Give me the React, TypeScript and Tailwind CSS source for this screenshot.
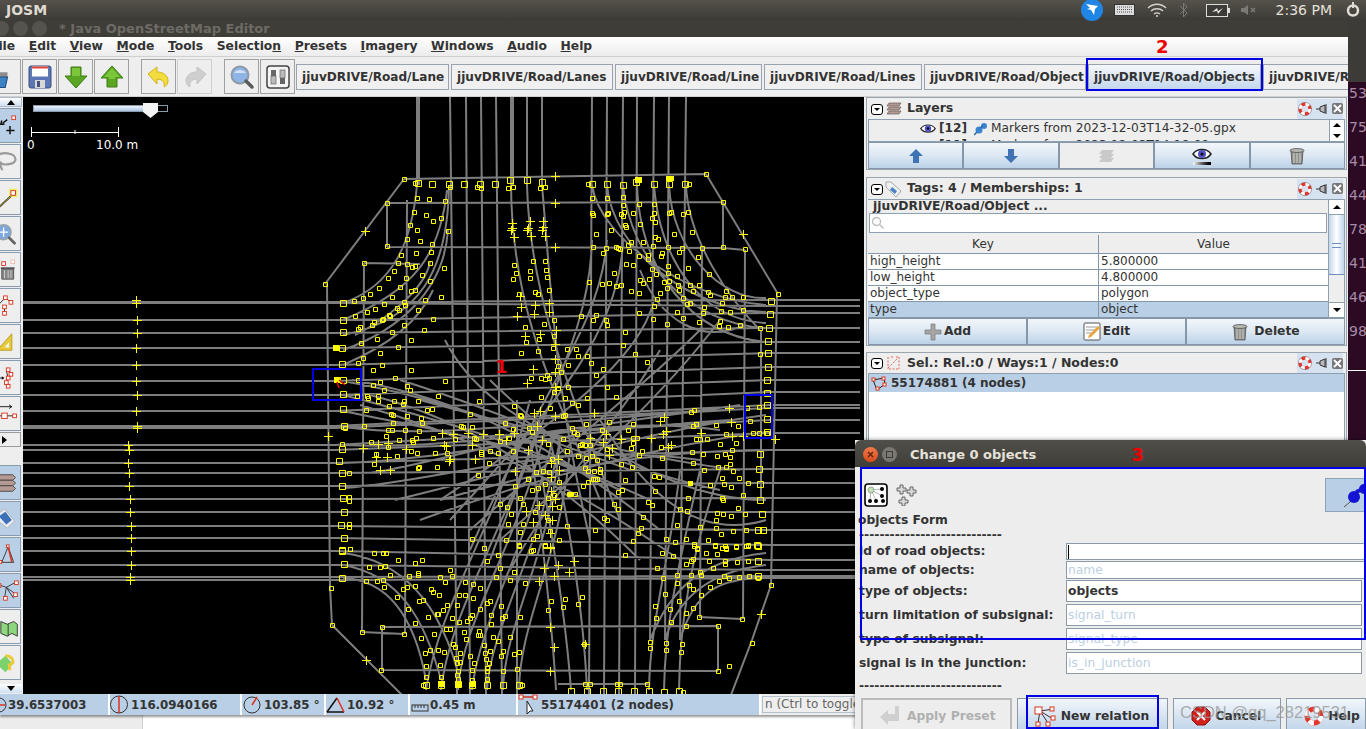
import React from "react";

type P = [number, number];

// Road geometry: cubic curves, control points only
const curves: [P, P, P, P][] = [
  [[417, 185], [412, 240], [395, 285], [343, 303]],
  [[447, 190], [440, 255], [415, 290], [343, 320]],
  [[449, 185], [448, 270], [420, 320], [343, 335]],
  [[448, 230], [444, 290], [400, 330], [343, 350]],
  [[433, 290], [420, 320], [390, 345], [343, 365]],
  [[430, 262], [425, 290], [385, 320], [355, 335]],
  [[592, 185], [600, 240], [690, 300], [766, 305]],
  [[607, 185], [612, 250], [690, 310], [766, 312]],
  [[623, 185], [630, 260], [690, 325], [766, 328]],
  [[637, 185], [640, 270], [690, 335], [766, 342]],
  [[654, 185], [660, 260], [700, 320], [766, 323]],
  [[669, 185], [672, 250], [720, 300], [766, 298]],
  [[686, 185], [688, 240], [730, 300], [760, 330]],
  [[640, 270], [660, 320], [700, 345], [745, 325]],
  [[511, 185], [512, 320], [560, 400], [600, 500]],
  [[527, 185], [530, 300], [570, 390], [620, 520]],
  [[542, 185], [552, 300], [555, 390], [590, 540]],
  [[592, 240], [590, 320], [560, 370], [490, 560]],
  [[607, 240], [600, 330], [540, 390], [470, 550]],
  [[623, 240], [620, 340], [540, 420], [450, 520]],
  [[654, 300], [640, 360], [560, 420], [440, 500]],
  [[530, 400], [500, 520], [440, 600], [426, 690]],
  [[540, 420], [510, 520], [450, 610], [441, 690]],
  [[545, 430], [520, 540], [462, 620], [458, 690]],
  [[555, 430], [530, 540], [480, 620], [472, 690]],
  [[560, 440], [540, 550], [490, 630], [487, 690]],
  [[560, 440], [550, 560], [505, 620], [503, 690]],
  [[570, 450], [560, 560], [520, 620], [519, 690]],
  [[530, 440], [540, 520], [552, 620], [556, 690]],
  [[535, 440], [550, 520], [566, 620], [571, 690]],
  [[550, 440], [570, 520], [584, 620], [587, 690]],
  [[680, 470], [670, 560], [650, 620], [649, 690]],
  [[700, 470], [680, 560], [665, 620], [664, 690]],
  [[720, 470], [690, 560], [680, 620], [679, 690]],
  [[343, 553], [400, 560], [440, 600], [460, 680]],
  [[343, 565], [400, 575], [425, 620], [441, 680]],
  [[343, 578], [390, 580], [415, 620], [426, 680]],
  [[766, 553], [700, 560], [670, 590], [650, 640]],
  [[766, 565], [720, 570], [680, 590], [665, 640]],
  [[766, 578], [720, 578], [695, 590], [680, 640]],
  [[766, 520], [700, 540], [650, 500], [600, 420]],
  [[766, 500], [700, 500], [640, 470], [580, 430]],
  [[343, 381], [450, 400], [520, 430], [630, 470]],
  [[343, 395], [440, 420], [530, 445], [650, 500]],
  [[343, 411], [430, 430], [520, 440], [620, 490]],
  [[343, 427], [440, 440], [540, 420], [730, 410]],
  [[343, 445], [450, 450], [560, 430], [740, 405]],
  [[343, 463], [450, 460], [560, 430], [730, 420]],
  [[370, 473], [460, 460], [580, 410], [720, 430]],
  [[345, 488], [450, 480], [550, 440], [700, 460]],
  [[360, 405], [450, 430], [550, 470], [680, 560]],
  [[370, 395], [470, 420], [560, 480], [640, 560]],
  [[352, 380], [470, 400], [560, 450], [660, 530]],
  [[766, 415], [650, 430], [520, 470], [395, 500]],
  [[766, 432], [660, 445], [530, 480], [420, 520]],
  [[766, 450], [660, 450], [540, 470], [440, 500]],
  [[740, 470], [650, 460], [530, 430], [420, 400]],
  [[720, 490], [620, 470], [530, 420], [400, 380]],
  [[700, 330], [640, 390], [560, 450], [470, 530]],
  [[720, 320], [660, 400], [580, 470], [500, 540]],
  [[660, 350], [620, 420], [560, 480], [510, 570]],
  [[445, 340], [470, 390], [520, 420], [560, 440]],
  [[490, 380], [520, 410], [550, 430], [570, 460]],
];

const hLines: [number, number][] = [
  [302, 300], [303, 306], [320, 313], [333, 328], [348, 342], [365, 353], [381, 367], [395, 380], [411, 392],
  [426, 405], [428, 408], [445, 420], [450, 433], [463, 450], [473, 469], [486, 483], [499, 498], [512, 512],
  [526, 530], [538, 545], [551, 560], [565, 570], [577, 576], [580, 578],
];

const vLines: number[][] = [
  [417, 97, 417, 185], [419, 97, 419, 185], [450, 97, 457, 695], [466, 97, 470, 695], [481, 97, 486, 695], [496, 97, 502, 695],
  [511, 97, 511, 185], [513, 97, 513, 185], [527, 97, 527, 185], [542, 97, 542, 185],
  [592, 97, 589, 695], [607, 97, 604, 695], [623, 97, 619, 695], [637, 97, 635, 695], [654, 97, 650, 640], [669, 97, 665, 640], [686, 97, 680, 640],
  [517, 400, 517, 695], [364, 263, 362, 632], [407, 200, 405, 634], [382, 627, 382, 670], [387, 203, 387, 247], [723, 202, 723, 248],
  [702, 248, 700, 618], [745, 250, 743, 619], [761, 330, 761, 500], [327, 284, 330, 587], [777, 294, 771, 585], [718, 626, 718, 671],
];

const segs: number[][] = [
  [404, 179, 706, 174], [706, 174, 778, 294], [404, 179, 325, 284], [330, 587, 332, 625], [332, 625, 402, 695],
  [771, 585, 752, 640], [752, 640, 731, 695], [387, 203, 723, 202], [387, 247, 723, 248], [723, 248, 745, 250],
  [382, 627, 718, 626], [381, 670, 718, 671], [362, 632, 404, 634], [699, 617, 742, 619], [558, 684, 648, 684], [364, 263, 420, 264],
];

// Node lists read off 3x crops: origin x, origin y, then x,y pairs in crop pixels
const A: number[] = [253,28,1159,13,202,100,1210,97,202,229,1210,231,1276,238,16,343,1375,373,133,280,292,85,328,88,376,94,283,127,319,136,340,154,364,145,271,166,292,181,385,184,262,208,301,214,337,223,244,256,289,250,334,247,235,280,262,283,286,289,277,292,331,280,373,295,223,304,307,316,205,325,259,325,331,334,241,352,178,355,286,361,274,364,364,382,151,373,217,382,130,385,103,394,316,391,193,403,253,397,256,406,166,418,232,415,238,421,295,421,142,427,106,439,208,436,211,439,187,451,190,448,340,448,163,457,157,466,121,472,115,478,253,466,313,481,217,487,172,508,124,520,274,511,235,532,181,550,130,565,115,580,187,586,160,601,274,601,226,625,115,631,181,637,376,634,160,646,262,649,271,661,193,661,355,679,112,678,142,679,145,685,175,679,284,40,470,52,484,55,391,52,565,55,580,52,661,55,676,52,805,43,1108,43,817,85,862,85,910,82,910,106,958,103,1003,103,817,130,820,136,865,130,862,133,913,127,904,133,910,139,940,130,1003,130,997,145,1048,130,1054,127,1090,133,1105,127,916,166,919,172,961,163,1006,157,874,181,829,193,1063,193,1117,187,1006,202,1015,208,934,217,970,217,925,226,820,232,859,235,889,232,895,235,901,238,1000,229,1045,232,1087,235,1147,235,928,244,850,250,1027,250,1024,259,1078,247,958,259,985,256,985,268,1135,262,919,283,940,286,1045,289,997,298,1105,295,883,310,1009,313,1045,310,1072,319,1168,313,961,331,970,340,988,328,1033,337,1048,334,808,337,847,343,868,340,889,349,904,346,1075,346,1111,346,1138,346,1042,355,1078,361,1120,364,934,364,958,370,1021,370,1165,367,1169,376,1219,364,1216,382,1237,382,1270,382,1012,388,1090,385,1207,400,1111,400,1102,403,1003,409,1153,412,1150,430,1070,427,958,430,1204,424,1231,427,1270,421,784,439,829,436,820,451,859,451,862,466,1000,448,1090,445,1138,457,1042,463,1201,454,1198,469,1225,472,1261,466,916,487,1321,475,910,526,946,553,1321,553,982,577,850,598,829,616,814,580,802,559,775,559,769,538,742,538,745,586,715,589,724,607,700,535,703,451,673,463,703,499,616,472,658,508,619,517,604,550,655,544,583,286,589,310,580,328,631,304,631,325,640,274,674,274,677,301,680,322,688,361,655,373,644,367,598,373,634,625,664,625,676,628,688,625,682,616,745,652,862,652,703,667,715,655,664,682,802,685,889,682,736,685];
const AB: number[] = [295,40,337,43,388,43,433,43,481,43,526,43,571,31,622,31,665,37,817,43,862,43,910,46,949,37,1003,43,1048,43,1096,43,70,400,70,449,70,487,67,535,67,583,70,631,70,673,1354,394,1351,433,1348,475,1345,514,1345,550,1345,592,1342,631,1342,670];
const AX: number[] = [136,184,706,19,706,100,706,232,1268,193,577,160,577,175,574,181,583,202,631,154,625,175,622,181,634,199,670,154,670,172,667,181,676,199,601,379,604,412,592,439,646,406,643,433,688,400,688,427,708,481,616,499,661,493,706,523,706,568,640,598,706,607,622,640,706,652];
const B: number[] = [145,4,193,2,223,2,265,2,448,2,178,19,220,13,553,18,109,31,292,31,307,28,184,43,190,46,421,43,232,49,274,55,571,46,574,49,661,25,103,79,190,70,277,70,394,79,400,82,427,80,526,70,700,48,706,46,175,91,187,91,226,91,268,94,550,88,598,85,607,97,44,85,169,109,310,115,208,121,247,121,259,115,250,127,376,118,433,115,439,118,538,115,511,124,124,127,655,133,175,142,35,133,699,118,244,154,262,160,316,160,352,160,454,157,454,163,481,154,505,160,550,154,712,154,139,163,202,169,667,178,133,193,478,190,322,202,265,205,268,202,58,220,619,217,640,214,658,217,445,226,595,238,688,247,646,253,556,259,607,271,625,265,673,286,718,281,655,295,571,295,58,292,58,304,511,313,580,313,532,322,688,322,616,337,544,343,655,361,535,373,580,373,58,373,58,382,712,379,571,397,661,394,622,409,427,418,610,418,529,421,688,421,568,436,646,436,61,448,463,445];
const BB: number[] = [40,28,43,79,37,148,28,184,37,220,37,259,40,295,43,337,34,376,43,415,37,451];
const BX: number[] = [337,100,370,103,415,100,460,103,508,103,553,100,613,40,631,34,676,49,622,79,145,133,100,145,175,130,529,121,637,121,343,136,349,139,427,136,229,148,595,151,139,172,172,172,361,178,358,184,436,178,151,211,181,211,556,214,664,190,685,178,688,211,664,232,664,274,676,298,628,316,667,319,589,334,646,346,667,361,610,367,661,400,661,442];
const C: number[] = [25,5,46,10,67,10,85,16,592,25,628,20,424,37,433,31,40,49,46,46,178,67,250,73,109,73,430,79,439,73,499,76,601,64,563,79,67,85,73,97,82,103,157,91,235,91,529,103,610,100,628,100,652,100,250,115,262,115,38,118,91,136,97,133,106,136,121,136,250,130,439,118,451,118,472,118,511,133,559,130,244,145,334,142,172,148,277,154,52,154,427,157,547,151,85,169,109,175,127,169,268,166,460,163,502,169,526,163,541,172,142,181,337,175,7,178,214,193,430,190,541,193,106,205,247,202,505,202,529,202,463,211,550,214,115,214,133,214,151,208,151,217,313,229,328,232,517,235,568,235,226,241,130,238,136,238,142,238,115,247,28,247,595,250,481,256,544,262,523,253,100,259,316,274,217,271,205,277,580,286,415,295,517,295,520,301,76,283,12,286,295,307,307,316,193,313,205,328,391,328,412,334,565,325,28,322,502,340,520,343,586,343,544,349,280,352,163,355,172,361,499,361,382,376,52,379,451,382,499,385,589,391,550,394,136,391,274,385,265,400,514,403,28,421,250,424,349,418,376,427,409,418,475,421,433,433,496,436,442,445,517,445,526,439,529,445,559,439,589,439,595,436];
const CB: number[] = [650,16,652,58,652,97,631,163,628,208,631,253,631,301,637,343,625,391,640,390,622,436];
const CX: number[] = [538,25,133,40,343,52,331,64,544,67,349,94,454,100,340,103,547,109,580,109,121,115,169,103,160,127,214,118,304,115,364,136,355,142,187,145,178,166,676,118];
const D: number[] = [61,13,133,25,160,25,169,25,463,10,568,2,610,16,604,19,646,2,505,31,205,46,277,46,256,55,472,49,118,67,151,67,166,64,361,76,511,70,553,82,181,91,238,94,265,85,265,90,331,97,367,94,499,97,109,109,142,109,160,106,346,112,406,112,430,118,541,106,586,115,163,127,220,133,232,127,256,124,304,133,310,142,451,130,328,151,388,151,406,151,202,157,430,160,268,169,280,166,472,175,481,169,664,169,706,163,352,181,382,181,514,184,700,187,235,193,340,196,451,193,655,196,322,208,325,208,295,217,367,220,427,211,421,220,412,229,484,211,517,220,526,214,571,217,388,232,256,235,484,238,157,247,349,253,361,253,448,259,403,262,97,262,223,268,313,268,445,271,451,271,274,280,490,277,541,277,409,283,505,289,370,298,376,307,463,301,301,316,325,316,343,322,286,325,391,325,466,325,481,319,520,319,553,328,568,322,421,334,514,334,379,340,469,343,382,355,391,352,433,355,478,355,331,361,289,364,472,370,562,373,154,376,385,379,427,376,472,379,520,379,382,391,289,397,334,397,385,403,427,406,472,403,280,421,577,421,5,241,2,130];
const DB: number[] = [37,19,43,58,37,100,289,421,334,421,385,418,427,421,472,421,520,421,568,421];
const DX: number[] = [109,346,643,70,685,61,673,94,628,109,661,10,718,82,661,247,661,379,673,307];
const E: number[] = [226,31,337,25,370,34,442,13,469,25,502,28,517,10,529,13,559,7,589,4,595,2,496,2,433,2,322,70,409,58,424,49,430,43,478,49,526,49,526,58,562,52,595,49,490,70,451,82,454,91,340,100,382,91,424,91,523,94,538,100,568,97,598,94,625,100,508,109,382,115,418,121,430,133,481,127,664,121,346,148,454,151,97,157,388,169,85,178,316,184,361,193,430,190,409,205,448,217,577,223,319,220,364,232,409,244,505,244,301,292,301,310,349,295,349,316,397,298,394,322,607,295,538,364,505,379,13,307,55,304,103,298,106,418,121,418,202,418,211,418,292,418,400,442,46,163,40,187,25,418];
const EB: number[] = [625,4,625,49,625,94,64,439,112,439,160,439,205,439,253,439,298,439,343,442,388,439];
const EX: number[] = [25,61,73,49,55,82,106,298,634,208];

const filled: number[][] = [
  [333, 345, 6, 6], [334, 377, 6, 6], [635, 177, 7, 6], [666, 176, 8, 5], [438, 681, 7, 6], [455, 681, 6, 7], [470, 681, 6, 6], [688, 481, 5, 5], [568, 492, 5, 5],
];

const leftCrosses: P[] = [
  [136, 300], [136, 303], [137, 320], [137, 333], [136, 348], [136, 365], [136, 381], [137, 395], [136, 411], [137, 426], [137, 428],
  [128, 445], [129, 450], [128, 463], [129, 473], [129, 486], [130, 499], [130, 512], [131, 526], [131, 538], [131, 551], [131, 565],
  [130, 577], [130, 580], [328, 436], [366, 660],
];

function buildMap() {
  let roads = "";
  let nodes = "";
  let big = "";
  let plus = "";
  const decode = (ox: number, oy: number, list: number[], keep: (x: number, y: number) => boolean, add: (x: number, y: number) => void) => {
    for (let i = 0; i + 1 < list.length; i += 2) {
      const x = Math.round(ox + list[i] / 3);
      const y = Math.round(oy + list[i + 1] / 3);
      if (keep(x, y)) add(x, y);
    }
  };
  const sq = (x: number, y: number, s: number) => `M${x + 0.5 - s / 2} ${y + 0.5 - s / 2}h${s}v${s}h${-s}z`;
  const addNode = (x: number, y: number) => (nodes += sq(x, y, 4));
  const addBig = (x: number, y: number) => (big += sq(x, y, 6));
  const addPlus = (x: number, y: number) => (plus += `M${x - 4} ${y + 0.5}h9M${x + 0.5} ${y - 4}v9`);
  const top = (_: number, y: number) => y < 400;
  const left = (x: number) => x < 570;
  const right = (x: number) => x >= 570;
  const sets: [number, number, number[], (x: number, y: number) => boolean][] = [
    [320, 170, A, top],
    [330, 400, B, left],
    [550, 400, C, right],
    [330, 545, D, left],
    [550, 545, E, right],
  ];
  sets.forEach(([ox, oy, l, k]) => decode(ox, oy, l, k, addNode));
  ([[320, 170, AB, top], [330, 400, BB, left], [550, 400, CB, right], [330, 545, DB, left], [550, 545, EB, right]] as typeof sets).forEach(
    ([ox, oy, l, k]) => decode(ox, oy, l, k, addBig),
  );
  ([[320, 170, AX, top], [330, 400, BX, left], [550, 400, CX, right], [330, 545, DX, left], [550, 545, EX, right]] as typeof sets).forEach(
    ([ox, oy, l, k]) => decode(ox, oy, l, k, addPlus),
  );
  leftCrosses.forEach(([x, y]) => addPlus(x, y));

  hLines.forEach(([l, r]) => {
    roads += `M23 ${l}L335 ${l}L770 ${r}L860 ${r}`;
  });
  vLines.forEach(([a, b, c, d]) => (roads += `M${a} ${b}L${c} ${d}`));
  segs.forEach(([a, b, c, d]) => (roads += `M${a} ${b}L${c} ${d}`));
  curves.forEach(([a, b, c, d]) => {
    roads += `M${a[0]} ${a[1]}C${b[0]} ${b[1]} ${c[0]} ${c[1]} ${d[0]} ${d[1]}`;
  });
  return { roads, nodes, big, plus };
}

function Roads() {
  const m = buildMap();
  return (
    <svg className="absolute left-[-23px] top-[-97px]" width={860} height={700} viewBox="0 0 860 700" fill="none">
      <path d={m.roads} stroke="#7e7e7e" strokeWidth="2" />
      <path d={m.nodes} stroke="#ffff00" strokeWidth="1" />
      <path d={m.big} stroke="#ffff00" strokeWidth="1" />
      <path d={m.plus} stroke="#ffff00" strokeWidth="1" />
      {filled.map(([x, y, w, h], i) => (
        <rect key={i} x={x} y={y} width={w} height={h} fill="#ffff00" />
      ))}
      <path d="M337 382l2 6M339 380l6 5" stroke="#e00" strokeWidth="1.5" />
    </svg>
  );
}

const Svg = ({ s = 24, children, className = "" }: { s?: number; children: React.ReactNode; className?: string }) => (
  <svg width={s} height={s} viewBox="0 0 24 24" className={`shrink-0 overflow-visible ${className}`} fill="none">
    {children}
  </svg>
);

const IconOpen = () => (
  <Svg s={28}>
    <path d="M-4 6h9l2 2h8v4H-4z" fill="#8d8d8d" />
    <path d="M-5 12h20l-2 9H-5z" fill="#3d83c4" stroke="#1f4f83" />
  </Svg>
);
const IconSave = () => (
  <Svg s={24}>
    <rect x="1" y="1" width="22" height="22" rx="2" fill="#5c78b4" stroke="#3c4e7e" />
    <rect x="4" y="1.5" width="16" height="10" fill="#fff" />
    <rect x="4" y="1.5" width="16" height="2" fill="#e0443a" />
    <rect x="7" y="15" width="10" height="8" fill="#d8d8d8" />
    <rect x="9" y="16" width="3" height="6" fill="#44557d" />
  </Svg>
);
const IconArrow = ({ up }: { up?: boolean }) => (
  <Svg s={24}>
    <path d={up ? "M12 1L23 13H17V22H7V13H1z" : "M12 23L23 11H17V2H7V11H1z"} fill="#5aa521" stroke="#3c7a12" />
    <path d={up ? "M12 3L20 12H15V14H9V12H4z" : "M8 3h8v8H8z"} fill="#7cc63a" />
  </Svg>
);
const IconUndo = ({ off }: { off?: boolean }) => (
  <Svg s={24} className={off ? "-scale-x-100" : ""}>
    <path
      d="M1 9L10 2v5c7 0 11 4 11 9 0 3-2 5-4 6 1-4-1-8-7-8v5z"
      fill={off ? "#cfcfcf" : "#f3dc3e"}
      stroke={off ? "#c4c4c4" : "#d3b31c"}
    />
  </Svg>
);
const IconZoom = () => (
  <Svg s={24}>
    <circle cx="10" cy="10" r="8.5" fill="#8fb4e6" stroke="#8f9aa6" strokeWidth="2" />
    <path d="M4 8c2-4 10-4 12 0z" fill="#cfe0f6" />
    <path d="M16 16l6 6" stroke="#5b5b5b" strokeWidth="3.5" strokeLinecap="round" />
  </Svg>
);
const IconPrefs = () => (
  <Svg s={24}>
    <rect x="1" y="1" width="22" height="22" rx="3" fill="#f4f4f4" stroke="#444" strokeWidth="1.5" />
    <rect x="5" y="5" width="5" height="6" fill="#666" />
    <rect x="5" y="11" width="5" height="8" fill="#bbb" stroke="#666" strokeWidth=".7" />
    <rect x="14" y="5" width="5" height="8" fill="#bbb" stroke="#666" strokeWidth=".7" />
    <rect x="14" y="13" width="5" height="6" fill="#666" />
  </Svg>
);

const Node = ({ x, y, s = 4 }: { x: number; y: number; s?: number }) => (
  <rect x={x} y={y} width={s} height={s} fill="#fff" stroke="#d7341c" />
);

const tools: React.ReactNode[] = [
  <Svg s={22} key="1"><Node x={14} y={1} /><path d="M12 12v9M8 17h9M9 5l-5 4M3 6l-1 4h4" stroke="#111" strokeWidth="1.6" /></Svg>,
  <Svg s={22} key="2"><path d="M-6 8c8-9 24-6 24 1 0 6-14 7-16 4-2 4 2 6 1 8" stroke="#9a9a9a" strokeWidth="2.4" /></Svg>,
  <Svg s={22} key="3"><rect x="11" y="2" width="9" height="9" fill="#f2ec58" /><Node x={13} y={4} s={5} /><path d="M13 10L0 22" stroke="#222" strokeWidth="2" /><path d="M13 10L0 22" stroke="#e8d530" strokeWidth=".8" /></Svg>,
  <Svg s={22} key="4"><circle cx="5" cy="10" r="8" fill="#7ba7e0" stroke="#9aa4ae" strokeWidth="2" /><path d="M5 5v10M0 10h10" stroke="#fff" strokeWidth="1.5" /><path d="M11 16l6 6" stroke="#666" strokeWidth="3" strokeLinecap="round" /></Svg>,
  <Svg s={22} key="5"><Node x={3} y={3} /><rect x="13" y="1" width="4" height="4" fill="#fff" stroke="#f0b9b0" /><path d="M3 11h13v11H3z" fill="#888" stroke="#555" /><path d="M2 10h15" stroke="#555" strokeWidth="2" /><path d="M6 12v9M10 12v9M13 12v9" stroke="#ccc" /></Svg>,
  <Svg s={22} key="6"><path d="M-2 12L7 3L13 8M6 14V20" stroke="#222" /><Node x={5} y={1} /><Node x={11} y={6} /><Node x={4} y={11} /><Node x={4} y={18} /></Svg>,
  <Svg s={22} key="7"><path d="M-2 21L14 3V21z" fill="#e8c93a" stroke="#b89b18" /><path d="M6 18L11 12V18z" fill="#f4f4f4" /></Svg>,
  <Svg s={22} key="8"><path d="M0 12h5M8 4l2 8-3 6 2 3" stroke="#222" /><path d="M3 10l3 2-3 2z" fill="#111" /><Node x={8} y={1} /><Node x={11} y={6} /><Node x={8} y={10} /><Node x={6} y={15} /><Node x={8} y={19} /></Svg>,
  <Svg s={22} key="9"><path d="M0 4h14M11 2l3 2-3 2" stroke="#111" /><path d="M0 14h18" stroke="#222" /><Node x={3} y={11} s={6} /><Node x={15} y={12} /></Svg>,
];

const tools2: React.ReactNode[] = [
  <Svg s={22} key="1"><path d="M-3 3h18l3 3-3 3H-3z" fill="#b49a95" stroke="#4e4340" /><path d="M-3 9h18l3 3-3 3H-3z" fill="#b49a95" stroke="#4e4340" /><path d="M-3 15h18l3 3-3 3H-3z" fill="#b49a95" stroke="#4e4340" /></Svg>,
  <Svg s={22} key="2"><path d="M-6 10L6 1l11 13-8 8z" fill="#e8ecf2" stroke="#b4b4b4" /><path d="M0 9L7 4l7 9-6 5z" fill="#3c70b8" /></Svg>,
  <Svg s={22} key="3"><path d="M10 3L3 20H16z" stroke="#333" /><path d="M10 3L14 20" stroke="#e0301c" strokeWidth="1.6" /><Node x={8} y={1} s={3} /><Node x={0} y={18} s={3} /></Svg>,
  <Svg s={22} key="4"><path d="M-1 5L8 8L19 2M8 8l-2 12M8 8l11 8M8 8l8 12" stroke="#333" /><Node x={-2} y={4} /><Node x={17} y={1} /><Node x={16} y={14} /><Node x={5} y={18} /></Svg>,
  <Svg s={22} key="5"><path d="M2 6l7 3 7-3 4 3v13l-6-3-5 3-7-3z" fill="#8ed77e" stroke="#333" /><path d="M10 9v13" stroke="#333" /></Svg>,
  <Svg s={22} key="6"><path d="M-3 13L7 4l8 9-8 9z" fill="#7bd16b" /><path d="M7 4c6 0 9 4 8 8l-4 2 1 6" stroke="#ecc935" strokeWidth="3" /></Svg>,
];

function ToolBtn({ children, off }: { children: React.ReactNode; off?: boolean }) {
  return (
    <div className={`h-[35px] w-[35px] shrink-0 flex items-center justify-center border ${off ? "border-[#d0d0d0]" : "border-[#a0a0a0]"} bg-[#eeeeee]`}>
      {children}
    </div>
  );
}

function Side({ children, on }: { children?: React.ReactNode; on?: boolean }) {
  return (
    <div
      className={`w-[21px] h-[35px] shrink-0 border border-l-0 border-[#8a9bb0] overflow-hidden flex items-center justify-center mb-px ${on ? "bg-[#b8cfe5]" : "bg-[#eeeeee]"}`}
    >
      {children}
    </div>
  );
}

function Preset({ w, label, on }: { w: number; label: string; on?: boolean }) {
  return (
    <div
      style={{ width: w }}
      className={`h-[26px] shrink-0 flex items-center pt-[2px] px-[5px] whitespace-nowrap overflow-hidden border border-[#9aa3ad] ${on ? "bg-gradient-to-b from-[#f4f8fc] to-[#c4d8ec]" : "bg-[#f0f0f0]"}`}
    >
      {label}
    </div>
  );
}

function PanelHeader({ icon, title, small }: { icon: React.ReactNode; title: string; small?: boolean }) {
  return (
    <div className={`flex items-center justify-between shrink-0 ${small ? "h-[20px]" : "h-[21px]"} bg-[#eeeeee] pr-[3px]`}>
      <div className="flex items-center">
        <span className="ml-[4px] w-[12px] h-[11px] border border-black rounded-[3px] bg-white flex items-center justify-center mt-px">
          <span className="w-0 h-0 border-x-[3px] border-x-transparent border-t-[3px] border-t-black" />
        </span>
        <span className="w-[22px] flex justify-center">{icon}</span>
        <span className="ml-[2px] font-bold text-[12.5px]">{title}</span>
      </div>
      <div className="flex items-center h-[20px] bg-[#d6e2ef] pl-[1px] gap-[4px]">
        <svg width="14" height="14" viewBox="0 0 14 14">
          <circle cx="7" cy="7" r="5" fill="none" stroke="#e4362a" strokeWidth="3.4" />
          <circle cx="7" cy="7" r="5" fill="none" stroke="#fff" strokeWidth="3.4" strokeDasharray="3.9 3.9" />
          <circle cx="7" cy="7" r="6.6" fill="none" stroke="#777" strokeWidth=".5" />
        </svg>
        <svg width="12" height="12" viewBox="0 0 12 12">
          <path d="M0 6h4M4 4l5-2v8L4 8zM10 1v10" stroke="#333" fill="#bbb" />
        </svg>
        <span className="w-[11px] h-[11px] bg-[#777] text-white rounded-[2px] flex items-center justify-center">
          <svg width="9" height="9" viewBox="0 0 9 9"><path d="M1 1l7 7M8 1l-7 7" stroke="#fff" strokeWidth="2" /></svg>
        </span>
      </div>
    </div>
  );
}

function BlueBtn({ children, off }: { children: React.ReactNode; off?: boolean }) {
  return (
    <div
      className={`flex-1 h-full flex items-center justify-center gap-[2px] border border-[#8598ab] ${off ? "bg-[#eeeeee]" : "bg-gradient-to-b from-[#f2f6fb] via-[#dde8f3] to-[#bcd2e8]"}`}
    >
      {children}
    </div>
  );
}

const Trash = ({ s = 18 }: { s?: number }) => (
  <svg width={s} height={s} viewBox="0 0 18 18">
    <path d="M3 4h12l-1 13H4z" fill="#8e8e8a" stroke="#444" strokeWidth=".7" />
    <path d="M6 5v11M9 5v11M12 5v11" stroke="#d2d2d0" />
    <ellipse cx="9" cy="3.5" rx="7" ry="2" fill="#b4b4b0" stroke="#444" strokeWidth=".7" />
  </svg>
);

const Eye = ({ w = 16 }: { w?: number }) => (
  <svg width={w} height={w * 0.7} viewBox="0 0 20 14">
    <path d="M1 7c4-6 14-6 18 0-4 6-14 6-18 0z" fill="#fff" stroke="#222" strokeWidth="1.5" />
    <circle cx="10" cy="7" r="4" fill="#5050c8" />
    <circle cx="10" cy="7" r="1.6" fill="#111" />
  </svg>
);

const KVRow = ({ k, v, on }: { k: string; v: string; on?: boolean }) => (
  <div className={`flex h-[16px] border-b border-[#8496aa] leading-[15px] ${on ? "bg-[#b8cfe5]" : "bg-white"}`}>
    <div className="w-[231px] pl-[2px] border-r border-[#8496aa]">{k}</div>
    <div className="flex-1 pl-[2px]">{v}</div>
  </div>
);

function FormRow({ label, h, children, short }: { label: string; h: string; children?: React.ReactNode; short?: boolean }) {
  return (
    <div className={`flex items-center ${h}`}>
      <span className="w-[212px] shrink-0 font-bold whitespace-nowrap pl-[5px] overflow-hidden">{label}</span>
      <div className={`${short ? "w-[296px]" : "w-[300px]"} h-full border border-[#8b9aa8] bg-white flex items-center pl-[1px] overflow-hidden`}>
        {children}
      </div>
    </div>
  );
}

function Status({ w, icon, text }: { w: number; icon?: React.ReactNode; text: string }) {
  return (
    <div
      style={{ width: w }}
      className="h-full shrink-0 flex items-center font-bold text-[11.8px] bg-[#b8cfe5] border-r-[2px] border-white whitespace-nowrap overflow-hidden"
    >
      {icon}
      <span className="pt-[2px]">{text}</span>
    </div>
  );
}

const Place = ({ n, top }: { n: string; top: number }) => (
  <div style={{ top }} className="absolute left-[1px] text-[#a98ba7] text-[14px] leading-[16px] whitespace-nowrap">
    {n}
  </div>
);

export default function App() {
  return (
    <div className="relative w-[1366px] h-[729px] overflow-hidden bg-[#2c0a24] text-[#333333] text-[12px] font-['DejaVu_Sans','Liberation_Sans',sans-serif]">
      {/* system bar */}
      <div className="h-[20px] flex items-center bg-gradient-to-b from-[#55524b] to-[#3d3b36] text-[#dfdbd2] font-bold text-[14px] relative z-10">
        <span className="ml-[6px] flex-1">JOSM</span>
        <div className="flex items-center font-normal text-[13px] text-[#e4e0d8]">
          <svg width="22" height="22" viewBox="0 0 22 22" className="mr-[11px]">
            <circle cx="11" cy="11" r="11" fill="#1f86e5" />
            <path d="M5 5l12 2-3 3-1 6-3-5-4-1 3-1z" fill="#fff" />
          </svg>
          <svg width="21" height="12" viewBox="0 0 21 12" className="mr-[12px]">
            <rect x=".5" y=".5" width="20" height="11" fill="#ddd" stroke="#333" />
            <path d="M3 3h15M3 5.500h15M3 8h15" stroke="#555" strokeDasharray="1 1" />
          </svg>
          <svg width="20" height="14" viewBox="0 0 20 14" className="mr-[12px]">
            <path d="M1 5c5-5 13-5 18 0M4 8c3-3 9-3 12 0M7 11c2-1.500 4-1.500 6 0" stroke="#d8d4cc" strokeWidth="1.300" fill="none" />
            <circle cx="10" cy="13" r="1" fill="#d8d4cc" />
          </svg>
          <svg width="9" height="16" viewBox="0 0 9 16" className="mr-[18px]">
            <path d="M1 4l7 7-3.500 4V1L8 5l-7 7" stroke="#7c7a74" fill="none" />
          </svg>
          <svg width="24" height="13" viewBox="0 0 24 13" className="mr-[11px]">
            <rect x=".5" y=".5" width="21" height="12" fill="#3d3b36" stroke="#ddd" />
            <rect x="22" y="4" width="2" height="5" fill="#ddd" />
            <path d="M6 8l5-4 1 3 5-3-5 6-1-3z" fill="#ddd" />
          </svg>
          <svg width="16" height="12" viewBox="0 0 16 12" className="mr-[19px]">
            <path d="M0 4h3l4-3v10l-4-3H0z" fill="#7c7a74" />
            <path d="M10 4l4 4M14 4l-4 4" stroke="#7c7a74" strokeWidth="1.500" />
          </svg>
          <span className="mr-[13px] text-[14px] whitespace-nowrap">2:36 PM</span>
          <svg width="16" height="16" viewBox="0 0 16 16" className="mr-[5px]">
            <circle cx="8" cy="8.500" r="5" fill="none" stroke="#e0dcd4" strokeWidth="2.500" />
            <path d="M8 0v6" stroke="#e0dcd4" strokeWidth="2" />
          </svg>
        </div>
      </div>

      <div className="flex h-[709px]">
        {/* JOSM window */}
        <div className="w-[1348px] shrink-0 flex flex-col relative">
          <div className="h-[17px] shrink-0 bg-[#3f3d38] flex items-center text-[#6d6b65] font-bold text-[13px] overflow-hidden">
            <div className="flex gap-[4px] -ml-[6px] mr-[12px]">
              <span className="w-[15px] h-[15px] rounded-full bg-[#55534e]" />
              <span className="w-[15px] h-[15px] rounded-full bg-[#55534e]" />
              <span className="w-[15px] h-[15px] rounded-full bg-[#55534e]" />
            </div>
            <span>* Java OpenStreetMap Editor</span>
          </div>
          <div className="h-[20px] shrink-0 bg-gradient-to-b from-[#ffffff] to-[#ececec] border-b border-[#d0d0d0] flex items-center font-bold text-[12.3px] whitespace-nowrap overflow-hidden">
            <div className="flex gap-[13.6px] -ml-[10px]">
              <span>File</span>
              <span><u>E</u>dit</span>
              <span><u>V</u>iew</span>
              <span><u>M</u>ode</span>
              <span><u>T</u>ools</span>
              <span>Selectio<u>n</u></span>
              <span><u>P</u>resets</span>
              <span><u>I</u>magery</span>
              <span><u>W</u>indows</span>
              <span><u>A</u>udio</span>
              <span><u>H</u>elp</span>
            </div>
          </div>
          <div className="h-[40px] shrink-0 bg-[#eeeeee] flex items-center font-bold text-[12.1px] overflow-hidden border-b border-[#cfcfcf]">
            <div className="flex gap-px -ml-[14px]">
              <ToolBtn><IconOpen /></ToolBtn>
              <ToolBtn><IconSave /></ToolBtn>
              <ToolBtn><IconArrow /></ToolBtn>
              <ToolBtn><IconArrow up /></ToolBtn>
              <span className="w-[10px]" />
              <ToolBtn><IconUndo /></ToolBtn>
              <ToolBtn off><IconUndo off /></ToolBtn>
              <span className="w-[10px]" />
              <ToolBtn><IconZoom /></ToolBtn>
              <ToolBtn><IconPrefs /></ToolBtn>
            </div>
            <div className="flex items-center gap-[2px] ml-[1px]">
              <Preset w={153} label="jjuvDRIVE/Road/Lane" />
              <Preset w={162} label="jjuvDRIVE/Road/Lanes" />
              <Preset w={147} label="jjuvDRIVE/Road/Line" />
              <Preset w={158} label="jjuvDRIVE/Road/Lines" />
              <Preset w={162} label="jjuvDRIVE/Road/Object" />
              <Preset w={173} label="jjuvDRIVE/Road/Objects" on />
              <Preset w={120} label="jjuvDRIVE/Road/Objects" />
            </div>
          </div>

          <div className="flex-1 min-h-0 flex">
            <div className="w-[23px] shrink-0 flex flex-col bg-[#eeeeee]">
              <div className="h-[10px] w-[22px] shrink-0 bg-gradient-to-b from-white to-[#cfdfef] border border-l-0 border-[#a9bace] flex items-center justify-center mb-px">
                <span className="w-0 h-0 border-x-[4px] border-x-transparent border-b-[5px] border-b-black" />
              </div>
              {tools.map((t, i) => (
                <Side key={i} on={i === 0}>{t}</Side>
              ))}
              <div className="w-[21px] h-[15px] shrink-0 border border-l-0 border-[#9a9a9a] flex items-center pl-[2px]">
                <span className="w-0 h-0 border-y-[4px] border-y-transparent border-l-[5px] border-l-black" />
              </div>
              <div className="h-[18px] shrink-0" />
              {tools2.map((t, i) => (
                <Side key={i} on={i < 4}>{t}</Side>
              ))}
              <div className="h-[9px] w-[22px] shrink-0 mt-[3px] bg-gradient-to-b from-white to-[#cfdfef] flex items-center justify-center">
                <span className="w-0 h-0 border-x-[4px] border-x-transparent border-t-[5px] border-t-black" />
              </div>
            </div>

            {/* map */}
            <div className="flex-1 relative bg-black overflow-hidden">
              <Roads />
              <div className="absolute left-[10px] top-[8px] w-[135px] h-[7px] border border-[#8a9aa8] flex">
                <div className="w-[117px] h-full bg-gradient-to-b from-[#f0f4fa] to-[#a8c4e4]" />
              </div>
              <div className="absolute left-[120px] top-[6px] w-[15px] h-[15px] bg-[#f4f4f4] [clip-path:polygon(0_0,100%_0,100%_60%,50%_100%,0_60%)]" />
              <svg className="absolute left-[8px] top-[30px]" width="90" height="12" viewBox="0 0 90 12">
                <path d="M.5 0v10M87.500 0v10M44 3v4M0 5.500h88" stroke="#fff" />
              </svg>
              <span className="absolute left-[4px] top-[39px] text-white text-[12px]">0</span>
              <span className="absolute left-[73px] top-[39px] text-white text-[12px] whitespace-nowrap">10.0 m</span>
              <span className="absolute left-[472px] top-[260px] text-[18px] leading-[20px] font-bold text-[#e8000b]">1</span>
              <div className="absolute left-[289px] top-[271px] w-[50px] h-[33px] border-2 border-[#0000e6]" />
              <div className="absolute left-[721px] top-[297px] w-[29px] h-[45px] border-2 border-[#0000e6]" />
            </div>

            {/* right panels */}
            <div className="w-[484px] shrink-0 bg-[#eeeeee] flex flex-col pl-[2px] pr-px">
              <div className="border border-[#9aa5b0] shrink-0">
                <PanelHeader
                  title="Layers"
                  icon={
                    <svg width="16" height="14" viewBox="0 0 16 14">
                      <path d="M3 1h12l-2 3H1zM3 5h12l-2 3H1zM3 9h12l-2 3H1z" fill="#b49a95" stroke="#6b5a56" strokeWidth=".7" />
                    </svg>
                  }
                />
                <div className="h-[23px] mx-px border border-[#8e9fb0] overflow-hidden relative text-[12.2px]">
                  <div className="flex items-center h-[17px] pl-[51px]">
                    <Eye />
                    <span className="ml-[3px] font-bold">[12]</span>
                    <svg width="14" height="14" viewBox="0 0 14 14" className="ml-[7px]">
                      <circle cx="10" cy="4" r="3" fill="#3a84d2" />
                      <circle cx="5" cy="8" r="3.500" fill="#3a84d2" />
                      <path d="M3 10l-3 3M6 6l3-2" stroke="#2a64a2" strokeWidth="1.500" />
                    </svg>
                    <span className="ml-[3px] whitespace-nowrap">Markers from 2023-12-03T14-32-05.gpx</span>
                  </div>
                  <div className="flex items-center h-[17px] pl-[51px]">
                    <Eye />
                    <span className="ml-[3px] font-bold">[11]</span>
                    <span className="ml-[24px] whitespace-nowrap">Markers from 2023-12-03T14-18-09</span>
                  </div>
                  <div className="absolute right-0 top-0 h-full w-[15px] bg-white border-l border-[#8e9fb0] flex flex-col items-center justify-around">
                    <span className="w-0 h-0 border-x-[4px] border-x-transparent border-b-[4px] border-b-black" />
                    <span className="w-0 h-0 border-x-[4px] border-x-transparent border-t-[4px] border-t-black" />
                  </div>
                </div>
                <div className="h-[27px] mx-px flex">
                  <BlueBtn>
                    <svg width="16" height="16" viewBox="0 0 16 16"><path d="M8 1l7 7h-4v7H5V8H1z" fill="#3f73b4" /></svg>
                  </BlueBtn>
                  <BlueBtn>
                    <svg width="16" height="16" viewBox="0 0 16 16"><path d="M8 15l7-7h-4V1H5v7H1z" fill="#3f73b4" /></svg>
                  </BlueBtn>
                  <BlueBtn off>
                    <svg width="18" height="16" viewBox="0 0 18 16"><path d="M4 2h12l-3 4H1zM4 6h12l-3 4H1zM4 10h12l-3 4H1z" fill="#c9c9c9" /></svg>
                  </BlueBtn>
                  <BlueBtn>
                    <span className="flex flex-col items-center"><Eye w={20} /><span className="w-[18px] h-[3px] bg-gradient-to-r from-white to-black mt-px" /></span>
                  </BlueBtn>
                  <BlueBtn><Trash /></BlueBtn>
                </div>
              </div>
              <div className="h-[7px] shrink-0" />
              <div className="border border-[#9aa5b0] shrink-0">
                <PanelHeader
                  title="Tags: 4 / Memberships: 1"
                  icon={
                    <svg width="18" height="18" viewBox="0 0 18 18">
                      <path d="M1 2h5l10 9-5 6L1 7z" fill="#eef1f4" stroke="#a8a8a8" />
                      <path d="M7 7l5 4-2 3-5-4z" fill="#4d85c4" />
                    </svg>
                  }
                />
                <div className="mx-px flex">
                  <div className="flex-1">
                    <div className="h-[14px] leading-[13px] font-bold text-[12.3px] pl-[5px] border-t border-[#8e9fb0]">jjuvDRIVE/Road/Object ...</div>
                    <div className="h-[20px] border border-[#8e9fb0] bg-white ml-[1px] mr-px mb-[2px] flex items-center pl-[1px]">
                      <svg width="14" height="14" viewBox="0 0 14 14"><circle cx="5.500" cy="5.500" r="4" fill="none" stroke="#bbb" strokeWidth="1.300" /><path d="M8.500 8.500l4 4" stroke="#bbb" strokeWidth="1.500" /></svg>
                    </div>
                    <div className="flex h-[19px] text-center items-center bg-[#eeeeee] border-b border-[#8496aa]">
                      <div className="w-[231px] border-r h-full leading-[18px] border-[#8496aa]">Key</div>
                      <div className="flex-1">Value</div>
                    </div>
                    <KVRow k="high_height" v="5.800000" />
                    <KVRow k="low_height" v="4.800000" />
                    <KVRow k="object_type" v="polygon" />
                    <KVRow k="type" v="object" on />
                  </div>
                  <div className="w-[17px] shrink-0 border border-[#8e9fb0] flex flex-col">
                    <div className="h-[15px] bg-white flex items-center justify-center border-b border-[#8e9fb0]">
                      <span className="w-0 h-0 border-x-[4px] border-x-transparent border-b-[4px] border-b-black" />
                    </div>
                    <div className="h-[60px] bg-gradient-to-r from-[#c2d6ea] via-white to-[#c2d6ea] border-b border-[#6c8fc0] flex items-end justify-center pb-[26px]">
                      <span className="w-[9px] h-[5px] border-y border-[#6c8fc0]" />
                    </div>
                    <div className="flex-1 bg-[#eeeeee]" />
                    <div className="h-[15px] bg-white flex items-center justify-center border-t border-[#8e9fb0]">
                      <span className="w-0 h-0 border-x-[4px] border-x-transparent border-t-[4px] border-t-black" />
                    </div>
                  </div>
                </div>
                <div className="h-[27px] mx-px flex font-bold text-[12.3px]">
                  <BlueBtn>
                    <svg width="18" height="18" viewBox="0 0 18 18"><path d="M7 1h4v6h6v4h-6v6H7v-6H1V7h6z" fill="#a6a6a6" stroke="#777" strokeWidth=".7" /></svg>
                    <span>Add</span>
                  </BlueBtn>
                  <BlueBtn>
                    <svg width="18" height="19" viewBox="0 0 18 19">
                      <rect x="1" y="1" width="16" height="17" rx="1" fill="#fff" stroke="#555" />
                      <path d="M3 5h11M3 8h9M3 11h6" stroke="#999" />
                      <path d="M5 16l1-3 9-9 2 2-9 9z" fill="#e8a33a" />
                    </svg>
                    <span>Edit</span>
                  </BlueBtn>
                  <BlueBtn>
                    <Trash />
                    <span className="ml-[3px]">Delete</span>
                  </BlueBtn>
                </div>
              </div>
              <div className="h-[6px] shrink-0" />
              <div className="border border-[#9aa5b0] flex-1 flex flex-col">
                <PanelHeader
                  small
                  title="Sel.: Rel.:0 / Ways:1 / Nodes:0"
                  icon={
                    <svg width="14" height="14" viewBox="0 0 14 14">
                      <path d="M1 1v12M4 1h2M9 1h3M12 1v12M2 13h10M1 12L11 2" stroke="#e06a50" strokeDasharray="2 1.500" />
                    </svg>
                  }
                />
                <div className="flex-1 mx-px bg-white border border-[#8e9fb0]">
                  <div className="h-[18px] bg-[#b8cfe5] flex items-center font-bold text-[12px] pl-[2px]">
                    <svg width="16" height="15" viewBox="0 0 16 15" className="mr-[4px]">
                      <path d="M2 4L13 2l1 6-8 6z" fill="none" stroke="#222" />
                      <rect x="1" y="2" width="3" height="3" fill="#fff" stroke="#d7341c" />
                      <rect x="11" y="1" width="3" height="3" fill="#fff" stroke="#d7341c" />
                      <rect x="12" y="7" width="3" height="3" fill="#fff" stroke="#d7341c" />
                      <rect x="5" y="11" width="3" height="3" fill="#fff" stroke="#d7341c" />
                    </svg>
                    55174881 (4 nodes)
                  </div>
                </div>
              </div>
            </div>
          </div>

          {/* status line */}
          <div className="h-[21px] shrink-0 flex items-center bg-[#eeeeee] shadow-[0_2px_2px_rgba(0,0,0,0.4)] z-[1] w-[860px]">
            <Status w={110} text="39.6537003" icon={
              <svg width="8" height="18" viewBox="0 0 8 18" className="shrink-0"><circle cx="-1" cy="9" r="7" fill="none" stroke="#333" /><path d="M-7 9h12" stroke="#e0301c" strokeWidth="1.500" /></svg>
            } />
            <Status w={132} text="116.0940166" icon={
              <svg width="20" height="19" viewBox="0 0 20 19" className="shrink-0 mr-[1px]"><circle cx="9" cy="9.500" r="8.500" fill="none" stroke="#333" /><path d="M9 1v17" stroke="#e0301c" strokeWidth="1.500" /></svg>
            } />
            <Status w={84} text="103.85 °" icon={
              <svg width="20" height="19" viewBox="0 0 20 19" className="shrink-0 ml-[1px] mr-[1px]"><circle cx="9" cy="10" r="8" fill="none" stroke="#333" /><path d="M9 10l5-8" stroke="#e0301c" strokeWidth="1.500" /></svg>
            } />
            <Status w={84} text="10.92 °" icon={
              <svg width="20" height="18" viewBox="0 0 20 18" className="shrink-0 mr-[1px]"><path d="M1 16h17" stroke="#111" strokeWidth="1.500" /><path d="M1 16L11 2" stroke="#111" strokeWidth="1.500" /><path d="M11 2l7 14" stroke="#e0301c" strokeWidth="1.500" /></svg>
            } />
            <Status w={108} text="0.45 m" icon={
              <svg width="19" height="18" viewBox="0 0 19 18" className="ml-[1px] shrink-0"><rect x="1" y="9" width="16" height="6" fill="none" stroke="#333" /><path d="M4 9v3M7 9v3M10 9v3M13 9v3" stroke="#333" /></svg>
            } />
            <Status w={243} text="55174401 (2 nodes)" icon={
              <svg width="22" height="21" viewBox="0 0 22 21" className="shrink-0 mr-[1px]">
                <path d="M3 3h15" stroke="#d7341c" strokeWidth="1.500" />
                <rect x="1" y="1" width="4" height="4" fill="#fff" stroke="#d7341c" />
                <rect x="15" y="1" width="4" height="4" fill="#fff" stroke="#d7341c" />
                <path d="M9 7v13l3-3 3 0z" fill="#fff" stroke="#222" />
              </svg>
            } />
            <div className="ml-[1px] h-[17px] flex-1 bg-[#eeeeee] border border-[#b4c0cc] font-normal text-[12px] text-[#666] leading-[15px] pl-[2px] whitespace-nowrap overflow-hidden">
              n (Ctrl to toggle)
            </div>
          </div>
          <div className="h-[14px] shrink-0 bg-white flex">
            <div className="w-[143px] bg-[#ececec] border-r border-[#cfcfcf]" />
          </div>
        </div>

        {/* terminal behind */}
        <div className="flex-1 relative">
          <div className="h-[62px] bg-[#3c3b37]" />
          <Place n="531" top={65} />
          <Place n="750" top={99} />
          <Place n="411" top={133} />
          <Place n="441" top={167} />
          <Place n="784" top={201} />
          <Place n="410" top={235} />
          <Place n="469" top={269} />
          <Place n="981" top={303} />
          <div className="absolute left-0 right-0 top-[350px] h-px bg-white" />
        </div>
      </div>

      {/* annotation */}
      <span className="absolute left-[1156px] top-[37px] text-[18px] leading-[20px] font-bold text-[#ee0000] z-10">2</span>
      <div className="absolute left-[1086px] top-[58px] w-[177px] h-[33px] border-2 border-[#0000e6] z-10" />

      {/* dialog */}
      <div className="absolute left-[855px] top-[440px] w-[511px] h-[289px] z-20 bg-[#ededed] shadow-[0_0_4px_rgba(0,0,0,0.5)] overflow-hidden">
        <div className="h-[27px] pt-[2px] bg-gradient-to-b from-[#514f49] to-[#3f3e39] rounded-t-[6px] flex items-center text-[#e6e2da] font-bold text-[13px]">
          <span className="ml-[8px] w-[15px] h-[15px] rounded-full bg-gradient-to-b from-[#f2794a] to-[#d8491a] flex items-center justify-center">
            <svg width="7" height="7" viewBox="0 0 7 7"><path d="M1 1l5 5M6 1L1 6" stroke="#5a2310" strokeWidth="1.300" /></svg>
          </span>
          <span className="ml-[4px] w-[15px] h-[15px] rounded-full bg-[#7a7870] flex items-center justify-center">
            <span className="w-[7px] h-[7px] border border-[#3c3b37]" />
          </span>
          <span className="ml-[13px] whitespace-nowrap">Change 0 objects</span>
          <span className="ml-[95px] text-[#ee0000] text-[18px] leading-[20px]">3</span>
        </div>
        <div className="h-[45px] relative flex items-center pt-[11px] pl-[9px] gap-[7px] overflow-visible">
          <svg width="24" height="24" viewBox="0 0 24 24">
            <rect x="1" y="1" width="22" height="22" rx="3" fill="#fff" stroke="#000" strokeWidth="1.600" />
            <path d="M7 7l10-1M7 7l11 6M7 7l-1 10M7 7l5 10" stroke="#888" strokeWidth=".6" />
            <circle cx="7" cy="7" r="3" fill="#bfe3b5" stroke="#777" strokeWidth=".6" />
            <circle cx="18" cy="6" r="2" fill="#000" />
            <circle cx="18" cy="13" r="2" fill="#000" />
            <circle cx="6" cy="18" r="2" fill="#000" />
            <circle cx="12" cy="18" r="2" fill="#000" />
            <circle cx="19" cy="18" r="2" fill="#000" />
          </svg>
          <svg width="22" height="22" viewBox="0 0 22 22">
            <path d="M5 1h3v3h3v3H8v3H5V7H2V4h3zM15 3h3v3h3v3h-3v3h-3V9h-3V6h3zM7 13h3v3h3v3h-3v3H7v-3H4v-3h3z" fill="#d8d8d8" stroke="#666" />
          </svg>
          <div className="absolute left-[470px] top-[11px] w-[41px] h-[34px] bg-[#b8cfe5] border border-[#8fa3b8] overflow-hidden">
            <svg width="30" height="30" viewBox="0 0 30 30" className="absolute left-[15px] top-[1px]">
              <circle cx="23" cy="9" r="5" fill="#1414d2" />
              <circle cx="13" cy="17" r="6" fill="#1414d2" />
              <path d="M15 12l7-3" stroke="#1414d2" strokeWidth="4" />
              <path d="M9 22l-6 5" stroke="#555" />
            </svg>
          </div>
        </div>
        <div className="flex flex-col font-bold text-[12.3px] -ml-[1px]">
          <div className="h-[16px] leading-[16px] -ml-[1px] pl-[5px] overflow-hidden whitespace-nowrap">objects Form</div>
          <div className="h-[15px] leading-[15px] pl-[5px] overflow-hidden whitespace-nowrap">----------------------------</div>
          <div className="flex flex-col">
            <div className="mb-[1px]"><FormRow label="id of road objects:" h="h-[17px]"><span className="w-px h-[14px] bg-black" /></FormRow></div>
            <div className="mb-[1px]"><FormRow label="name of objects:" h="h-[18px]"><span className="font-normal text-[#bccfe2]">name</span></FormRow></div>
            <div className="mb-[2px]"><FormRow short label="type of objects:" h="h-[22px]"><span>objects</span></FormRow></div>
            <div className="mb-[2px]"><FormRow short label="turn limitation of subsignal:" h="h-[22px]"><span className="font-normal text-[#bccfe2]">signal_turn</span></FormRow></div>
            <div className="mb-[2px]"><FormRow short label="type of subsignal:" h="h-[22px]"><span className="font-normal text-[#bccfe2]">signal_type</span></FormRow></div>
            <div><FormRow short label="signal is in the junction:" h="h-[22px]"><span className="font-normal text-[#bccfe2]">is_in_junction</span></FormRow></div>
          </div>
          <div className="h-[14px] leading-[14px] pl-[5px] mt-[5px] overflow-hidden whitespace-nowrap">----------------------------</div>
          <div className="flex mt-[5px] h-[36px] pl-[7px] gap-[5px] whitespace-nowrap">
            <div className="w-[151px] border-2 border-[#bbbbbb] flex items-center pl-[17px] text-[#b0b0b0] gap-[5px]">
              <svg width="22" height="20" viewBox="0 0 22 20"><path d="M0 11l8-7v4h7V0h4v15H8v4z" fill="#cfcfcf" /></svg>
              Apply Preset
            </div>
            <div className="w-[152px] border border-[#8b9aa8] bg-gradient-to-b from-[#f2f6fb] to-[#bcd2e8] flex items-center pl-[16px] gap-[5px]">
              <svg width="22" height="22" viewBox="0 0 22 22">
                <path d="M6 6L20 4M6 6l13 8M6 6L4 18M6 6l8 12" stroke="#333" />
                <rect x="1" y="2" width="7" height="7" fill="#fff" stroke="#d7341c" />
                <rect x="16" y="2" width="4" height="4" fill="#fff" stroke="#d7341c" />
                <rect x="17" y="11" width="4" height="4" fill="#fff" stroke="#d7341c" />
                <rect x="2" y="17" width="4" height="4" fill="#fff" stroke="#d7341c" />
                <rect x="12" y="17" width="4" height="4" fill="#fff" stroke="#d7341c" />
              </svg>
              New relation
            </div>
            <div className="w-[108px] border border-[#8b9aa8] bg-gradient-to-b from-[#f2f6fb] to-[#bcd2e8] flex items-center pl-[17px] gap-[4px]">
              <svg width="20" height="20" viewBox="0 0 20 20"><path d="M6 1h8l5 5v8l-5 5H6l-5-5V6z" fill="#d2201c" stroke="#8b1512" /><path d="M6 6l8 8M14 6l-8 8" stroke="#fff" strokeWidth="2" /></svg>
              Cancel
            </div>
            <div className="w-[80px] border border-[#8b9aa8] bg-gradient-to-b from-[#f2f6fb] to-[#bcd2e8] flex items-center pl-[17px] gap-[4px]">
              <svg width="20" height="20" viewBox="0 0 20 20">
                <circle cx="10" cy="10" r="7" fill="none" stroke="#e4362a" strokeWidth="5" />
                <circle cx="10" cy="10" r="7" fill="none" stroke="#fff" strokeWidth="5" strokeDasharray="5.500 5.500" />
              </svg>
              Help
            </div>
          </div>
        </div>
        <div className="absolute left-[5px] top-[27px] w-[506px] h-[173px] border-2 border-[#0000e6]" />
        <div className="absolute left-[171px] top-[255px] w-[133px] h-[34px] border-2 border-[#0000e6]" />
        <div className="absolute left-[325px] top-[263px] text-[16.5px] leading-[18px] text-[#999999]/80 font-['Liberation_Sans',sans-serif] whitespace-nowrap">CSDN @qq_28219531</div>
      </div>
    </div>
  );
}
